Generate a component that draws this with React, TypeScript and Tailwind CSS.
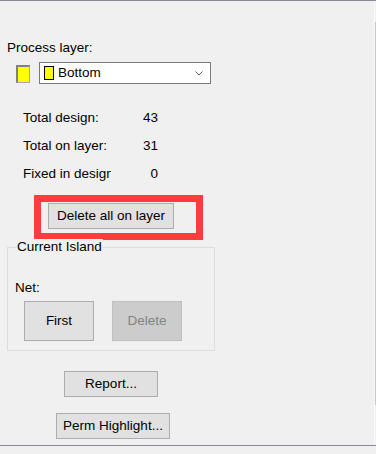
import React from "react";

const font = { fontFamily: '"Liberation Sans", Arial, sans-serif' };

function Btn({ children, className = "", disabled = false }: { children: React.ReactNode; className?: string; disabled?: boolean }) {
  return (
    <button
      className={
        "flex items-center justify-center border text-[13.5px] leading-[16px] " +
        (disabled ? "bg-[#cccccc] border-[#bfbfbf] text-[#838383] " : "bg-[#e1e1e1] border-[#adadad] text-black ") +
        className
      }
      disabled={disabled}
    >
      {children}
    </button>
  );
}

export default function App() {
  return (
    <div className="w-[376px] h-[454px] bg-[#f0f0f0] flex flex-col overflow-hidden text-black" style={font}>
      <div className="h-[1px] bg-[#898a95]" />
      <div className="flex h-[444px]">
        <div className="flex-1 flex flex-col">
          <div className="pt-[39px] pl-[7px] text-[13.5px] leading-[16px]">Process layer:</div>

          <div className="mt-[6px] flex items-start pl-[16px]">
            <div className="mt-[3px] w-[14px] h-[18px] bg-[#ffff00] border-t-2 border-l-2 border-r border-b border-t-[#808080] border-l-[#808080] border-r-[#a8a8a8] border-b-[#a8a8a8]" />
            <div className="ml-[9px] w-[172px] h-[22px] bg-white border border-[#7a7a7a] flex items-center pl-[4px] pr-[7px]">
              <div className="w-[10px] h-[14px] bg-[#ffff00] border border-black" />
              <span className="ml-[4px] text-[13.5px] leading-[16px] flex-1">Bottom</span>
              <svg width="8" height="5" viewBox="0 0 8 5" className="mt-[1px]">
                <polyline points="0.5,0.5 4,4 7.5,0.5" fill="none" stroke="#5a5a5a" strokeWidth="1" />
              </svg>
            </div>
          </div>

          <div className="mt-[26px] pl-[23px] grid grid-cols-[88px_47px] gap-y-[12px] text-[13.5px] leading-[16px]">
            <span className="whitespace-nowrap overflow-hidden">Total design:</span>
            <span className="text-right">43</span>
            <span className="whitespace-nowrap overflow-hidden">Total on layer:</span>
            <span className="text-right">31</span>
            <span className="whitespace-nowrap overflow-hidden">Fixed in design</span>
            <span className="text-right">0</span>
          </div>

          <div className="mt-[21px] pl-[48px]">
            <div className="relative w-[126px]">
              <Btn className="w-[126px] h-[26px]">Delete all on layer</Btn>
              <div className="absolute left-[-14px] top-[-8px] w-[169px] h-[45px] border-[7px] border-[#ff3c3c] pointer-events-none" />
            </div>
          </div>

          <div className="mt-[18px] ml-[7px] w-[208px] h-[104px] border border-[#dcdcdc] relative pl-[7px] pt-[32px]">
            <span className="absolute left-[8px] top-[-9px] px-[1px] bg-[#f0f0f0] text-[13.5px] leading-[16px]">Current Island</span>
            <div className="text-[13.5px] leading-[16px]">Net:</div>
            <div className="mt-[5px] ml-[9px] flex gap-[18px]">
              <Btn className="w-[70px] h-[40px]">First</Btn>
              <Btn className="w-[70px] h-[40px]" disabled>Delete</Btn>
            </div>
          </div>

          <div className="mt-[20px] pl-[64px]">
            <Btn className="w-[94px] h-[26px]">Report...</Btn>
          </div>
          <div className="mt-[16px] pl-[56px]">
            <Btn className="w-[114px] h-[26px]">Perm Highlight...</Btn>
          </div>
        </div>
        <div className="w-[1px] bg-[#fafafa]" />
        <div className="w-[1px] flex flex-col">
          <div className="h-[21px] bg-[#f0f0f0]" />
          <div className="h-[383px] bg-[#c6c6c6]" />
          <div className="flex-1 bg-[#f0f0f0]" />
        </div>
      </div>
      <div className="h-[1px] bg-[#898a95]" />
    </div>
  );
}
